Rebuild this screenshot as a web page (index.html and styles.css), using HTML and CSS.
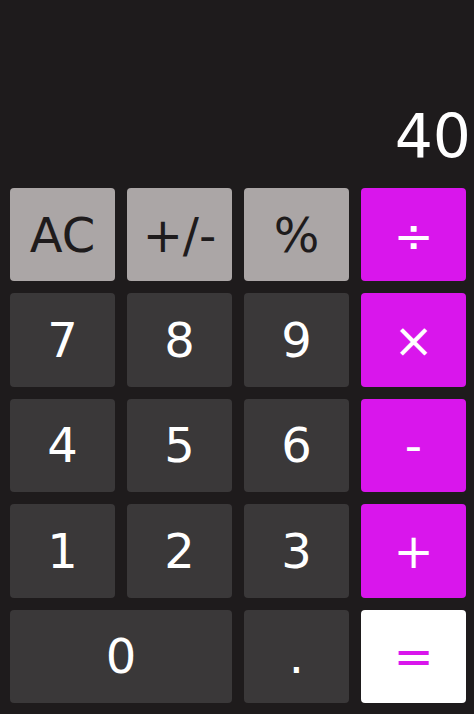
FILE: index.html
```html
<!DOCTYPE html>
<html>
<head>
<meta charset="utf-8">
<link rel="stylesheet" href="styles.css">
</head>
<body>
<div class="calc">
  <div class="display"><span class="value">40</span></div>
  <div class="keys">
    <button class="key fn">AC</button>
    <button class="key fn">+/-</button>
    <button class="key fn">%</button>
    <button class="key op">÷</button>
    <button class="key num">7</button>
    <button class="key num">8</button>
    <button class="key num">9</button>
    <button class="key op">×</button>
    <button class="key num">4</button>
    <button class="key num">5</button>
    <button class="key num">6</button>
    <button class="key op">-</button>
    <button class="key num">1</button>
    <button class="key num">2</button>
    <button class="key num">3</button>
    <button class="key op">+</button>
    <button class="key num wide">0</button>
    <button class="key num">.</button>
    <button class="key eq">=</button>
  </div>
</div>
</body>
</html>
```
FILE: styles.css
```css
html, body {
  margin: 0;
  padding: 0;
  background: #1e1b1c;
}
.calc {
  width: 474px;
  height: 714px;
  display: flex;
  flex-direction: column;
  font-family: "DejaVu Sans", Verdana, sans-serif;
}
.display {
  flex: 1;
  display: flex;
  align-items: flex-end;
  justify-content: flex-end;
  padding: 0 3px 22px 0;
}
.value {
  color: #ffffff;
  font-size: 60px;
  line-height: 60px;
}
.keys {
  height: 515px;
  display: grid;
  grid-template-columns: repeat(4, 1fr);
  grid-template-rows: repeat(5, 1fr);
  gap: 12px;
  padding: 0 8px 11px 10px;
}
.key {
  border: none;
  border-radius: 4px;
  font-family: "DejaVu Sans", Verdana, sans-serif;
  font-size: 48px;
  padding: 0;
  margin: 0;
  display: flex;
  align-items: center;
  justify-content: center;
}
.fn {
  background: #aba6a6;
  color: #1e1b1c;
}
.num {
  background: #3a3839;
  color: #ffffff;
}
.op {
  background: #d916ec;
  color: #ffffff;
}
.eq {
  background: #ffffff;
  color: #d916ec;
}
.wide {
  grid-column: span 2;
}
```
